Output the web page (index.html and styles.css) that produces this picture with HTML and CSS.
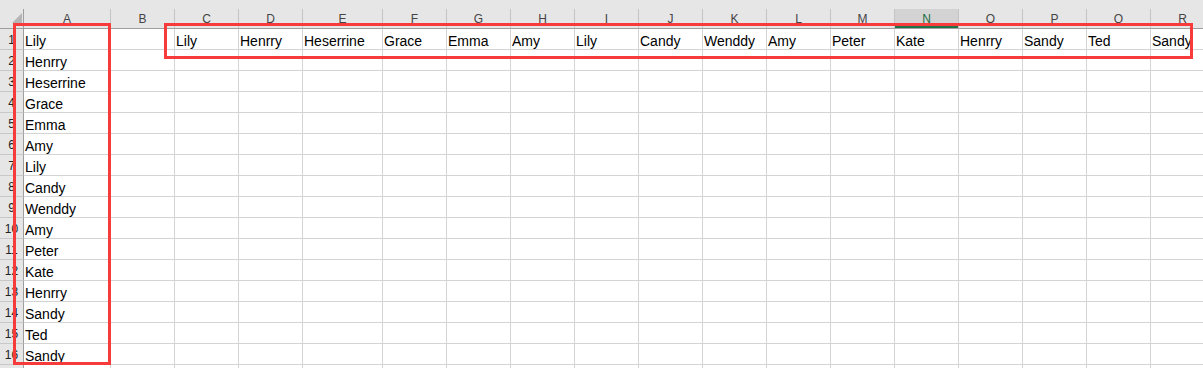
FILE: index.html
```html
<!DOCTYPE html>
<html>
<head>
<meta charset="utf-8">
<link rel="stylesheet" href="styles.css">
</head>
<body>
<div class="sheet">
  <div class="topstrip"></div>
  <div class="grid">
    <div class="corner"><svg width="10" height="10" viewBox="0 0 10 10"><polygon points="10,0 10,10 0,10" fill="#b5b5b5"/></svg></div>
    <div class="ch">A</div><div class="ch">B</div><div class="ch">C</div><div class="ch">D</div><div class="ch">E</div><div class="ch">F</div><div class="ch">G</div><div class="ch">H</div><div class="ch">I</div><div class="ch">J</div><div class="ch">K</div><div class="ch">L</div><div class="ch">M</div><div class="ch sel">N</div><div class="ch">O</div><div class="ch">P</div><div class="ch">Q</div><div class="ch">R</div>

    <div class="rh">1</div><div class="c">Lily</div><div class="c"></div><div class="c">Lily</div><div class="c">Henrry</div><div class="c">Heserrine</div><div class="c">Grace</div><div class="c">Emma</div><div class="c">Amy</div><div class="c">Lily</div><div class="c">Candy</div><div class="c">Wenddy</div><div class="c">Amy</div><div class="c">Peter</div><div class="c">Kate</div><div class="c">Henrry</div><div class="c">Sandy</div><div class="c">Ted</div><div class="c">Sandy</div>

    <div class="rh">2</div><div class="c">Henrry</div><div class="c"></div><div class="c"></div><div class="c"></div><div class="c"></div><div class="c"></div><div class="c"></div><div class="c"></div><div class="c"></div><div class="c"></div><div class="c"></div><div class="c"></div><div class="c"></div><div class="c"></div><div class="c"></div><div class="c"></div><div class="c"></div><div class="c"></div>
    <div class="rh">3</div><div class="c">Heserrine</div><div class="c"></div><div class="c"></div><div class="c"></div><div class="c"></div><div class="c"></div><div class="c"></div><div class="c"></div><div class="c"></div><div class="c"></div><div class="c"></div><div class="c"></div><div class="c"></div><div class="c"></div><div class="c"></div><div class="c"></div><div class="c"></div><div class="c"></div>
    <div class="rh">4</div><div class="c">Grace</div><div class="c"></div><div class="c"></div><div class="c"></div><div class="c"></div><div class="c"></div><div class="c"></div><div class="c"></div><div class="c"></div><div class="c"></div><div class="c"></div><div class="c"></div><div class="c"></div><div class="c"></div><div class="c"></div><div class="c"></div><div class="c"></div><div class="c"></div>
    <div class="rh">5</div><div class="c">Emma</div><div class="c"></div><div class="c"></div><div class="c"></div><div class="c"></div><div class="c"></div><div class="c"></div><div class="c"></div><div class="c"></div><div class="c"></div><div class="c"></div><div class="c"></div><div class="c"></div><div class="c"></div><div class="c"></div><div class="c"></div><div class="c"></div><div class="c"></div>
    <div class="rh">6</div><div class="c">Amy</div><div class="c"></div><div class="c"></div><div class="c"></div><div class="c"></div><div class="c"></div><div class="c"></div><div class="c"></div><div class="c"></div><div class="c"></div><div class="c"></div><div class="c"></div><div class="c"></div><div class="c"></div><div class="c"></div><div class="c"></div><div class="c"></div><div class="c"></div>
    <div class="rh">7</div><div class="c">Lily</div><div class="c"></div><div class="c"></div><div class="c"></div><div class="c"></div><div class="c"></div><div class="c"></div><div class="c"></div><div class="c"></div><div class="c"></div><div class="c"></div><div class="c"></div><div class="c"></div><div class="c"></div><div class="c"></div><div class="c"></div><div class="c"></div><div class="c"></div>
    <div class="rh">8</div><div class="c">Candy</div><div class="c"></div><div class="c"></div><div class="c"></div><div class="c"></div><div class="c"></div><div class="c"></div><div class="c"></div><div class="c"></div><div class="c"></div><div class="c"></div><div class="c"></div><div class="c"></div><div class="c"></div><div class="c"></div><div class="c"></div><div class="c"></div><div class="c"></div>
    <div class="rh">9</div><div class="c">Wenddy</div><div class="c"></div><div class="c"></div><div class="c"></div><div class="c"></div><div class="c"></div><div class="c"></div><div class="c"></div><div class="c"></div><div class="c"></div><div class="c"></div><div class="c"></div><div class="c"></div><div class="c"></div><div class="c"></div><div class="c"></div><div class="c"></div><div class="c"></div>
    <div class="rh">10</div><div class="c">Amy</div><div class="c"></div><div class="c"></div><div class="c"></div><div class="c"></div><div class="c"></div><div class="c"></div><div class="c"></div><div class="c"></div><div class="c"></div><div class="c"></div><div class="c"></div><div class="c"></div><div class="c"></div><div class="c"></div><div class="c"></div><div class="c"></div><div class="c"></div>
    <div class="rh">11</div><div class="c">Peter</div><div class="c"></div><div class="c"></div><div class="c"></div><div class="c"></div><div class="c"></div><div class="c"></div><div class="c"></div><div class="c"></div><div class="c"></div><div class="c"></div><div class="c"></div><div class="c"></div><div class="c"></div><div class="c"></div><div class="c"></div><div class="c"></div><div class="c"></div>
    <div class="rh">12</div><div class="c">Kate</div><div class="c"></div><div class="c"></div><div class="c"></div><div class="c"></div><div class="c"></div><div class="c"></div><div class="c"></div><div class="c"></div><div class="c"></div><div class="c"></div><div class="c"></div><div class="c"></div><div class="c"></div><div class="c"></div><div class="c"></div><div class="c"></div><div class="c"></div>
    <div class="rh">13</div><div class="c">Henrry</div><div class="c"></div><div class="c"></div><div class="c"></div><div class="c"></div><div class="c"></div><div class="c"></div><div class="c"></div><div class="c"></div><div class="c"></div><div class="c"></div><div class="c"></div><div class="c"></div><div class="c"></div><div class="c"></div><div class="c"></div><div class="c"></div><div class="c"></div>
    <div class="rh">14</div><div class="c">Sandy</div><div class="c"></div><div class="c"></div><div class="c"></div><div class="c"></div><div class="c"></div><div class="c"></div><div class="c"></div><div class="c"></div><div class="c"></div><div class="c"></div><div class="c"></div><div class="c"></div><div class="c"></div><div class="c"></div><div class="c"></div><div class="c"></div><div class="c"></div>
    <div class="rh">15</div><div class="c">Ted</div><div class="c"></div><div class="c"></div><div class="c"></div><div class="c"></div><div class="c"></div><div class="c"></div><div class="c"></div><div class="c"></div><div class="c"></div><div class="c"></div><div class="c"></div><div class="c"></div><div class="c"></div><div class="c"></div><div class="c"></div><div class="c"></div><div class="c"></div>
    <div class="rh">16</div><div class="c">Sandy</div><div class="c"></div><div class="c"></div><div class="c"></div><div class="c"></div><div class="c"></div><div class="c"></div><div class="c"></div><div class="c"></div><div class="c"></div><div class="c"></div><div class="c"></div><div class="c"></div><div class="c"></div><div class="c"></div><div class="c"></div><div class="c"></div><div class="c"></div>
    <div class="rh"></div><div class="c"></div><div class="c"></div><div class="c"></div><div class="c"></div><div class="c"></div><div class="c"></div><div class="c"></div><div class="c"></div><div class="c"></div><div class="c"></div><div class="c"></div><div class="c"></div><div class="c"></div><div class="c"></div><div class="c"></div><div class="c"></div><div class="c"></div><div class="c"></div>
  </div>
  <div class="mark mark-col"></div>
  <div class="mark mark-row"></div>
</div>
</body>
</html>
```

FILE: styles.css
```css
* { box-sizing: border-box; }
html, body {
  margin: 0;
  padding: 0;
  width: 1203px;
  height: 368px;
  overflow: hidden;
  background: #ffffff;
}
.sheet {
  position: relative;
  width: 1203px;
  height: 368px;
  overflow: hidden;
  font-family: "Liberation Sans", Arial, sans-serif;
}
.topstrip {
  height: 9px;
  background: #e6e6e6;
}
.grid {
  display: grid;
  grid-template-columns: 24px 87px 64px 64px 64px 80px repeat(13, 64px);
  grid-template-rows: 20px repeat(17, 21px);
  width: 1215px;
}
.corner {
  background: #e6e6e6;
  border-right: 1px solid #9e9e9e;
  border-bottom: 1px solid #9e9e9e;
  display: flex;
  justify-content: flex-end;
  align-items: flex-end;
  padding-bottom: 5px;
  padding-right: 1px;
}
.corner svg { display: block; }
.ch {
  background: #e6e6e6;
  border-right: 1px solid #c4c4c4;
  border-bottom: 1px solid #9e9e9e;
  color: #444444;
  font-size: 12px;
  line-height: 14px;
  padding-top: 3px;
  text-align: center;
  overflow: hidden;
}
.ch.sel {
  background: #d3d3d3;
  color: #1e6b40;
  box-shadow: inset 0 -2px 0 #217346;
}
.rh {
  background: #e6e6e6;
  border-right: 1px solid #9e9e9e;
  border-bottom: 1px solid #c8c8c8;
  color: #222222;
  font-size: 12px;
  line-height: 20px;
  padding-top: 1px;
  text-align: center;
  overflow: hidden;
  white-space: nowrap;
}
.c {
  border-right: 1px solid #d4d4d4;
  border-bottom: 1px solid #d4d4d4;
  color: #000000;
  font-size: 14px;
  line-height: 20px;
  padding: 2px 0 0 1px;
  white-space: nowrap;
  overflow: hidden;
}
.mark {
  position: absolute;
  border: 3px solid #f73b3b;
}
.mark-col {
  left: 13px;
  top: 23px;
  width: 98px;
  height: 342px;
}
.mark-row {
  left: 164px;
  top: 23px;
  width: 1029px;
  height: 36px;
}
```
